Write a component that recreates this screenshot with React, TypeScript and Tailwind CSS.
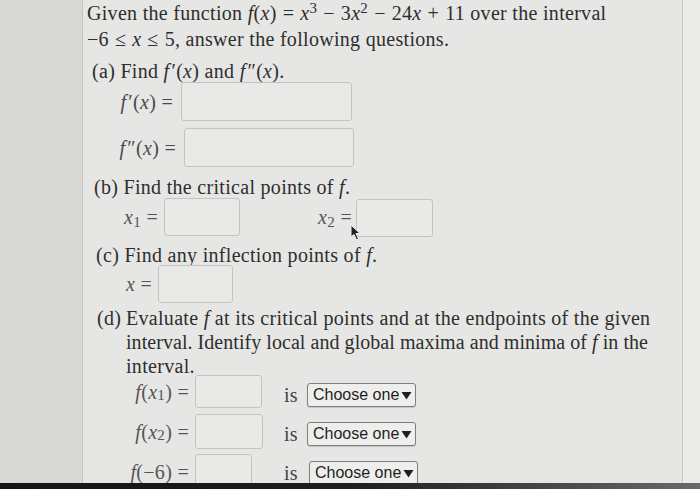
import React from 'react';

function Box({ w, h }: { w: string; h: string }) {
  return <div className={`${w} ${h} rounded-[3px] border-[1.5px] border-[#c3c3c1] bg-[#e9e9e7] shrink-0`} />;
}

function Select() {
  return (
    <div className="w-[109px] h-[24px] rounded-[3px] border border-[#7e7e7e] bg-[#eeeeec] pl-[5px] pr-[3px] flex items-center justify-between whitespace-nowrap font-['Liberation_Sans',sans-serif] text-[16px] tracking-normal text-[#1f1f1f] shadow-[0_1px_1px_rgba(0,0,0,0.15)]">
      <span>Choose one</span>
      <svg width="11" height="9" viewBox="0 0 11 9">
        <path d="M0.5 1 L10.5 1 L5.5 8.5 Z" fill="#1f1f1f" />
      </svg>
    </div>
  );
}

// opérateur avec l'espacement large de LaTeX
function Op({ c }: { c: string }) {
  return <span className="mx-[6px]">{c}</span>;
}

export default function App() {
  return (
    <div className="relative w-[700px] h-[489px] overflow-hidden flex font-['Liberation_Serif',serif] text-[20px] tracking-[0.3px] text-[#2e2e2e]">
      {/* bande grise à gauche */}
      <div className="w-[83px] shrink-0 bg-[#d8d8d7] border-r border-[#c4c4c2]" />

      {/* panneau principal */}
      <div className="w-[600px] shrink-0 bg-[#e6e6e4] border-r border-[#c6c6c4] flex flex-col">
        <p className="ml-[4px] leading-[26px] whitespace-nowrap">
          Given the function <i>f</i>(<i>x</i>)<Op c="=" /><i>x</i><sup>3</sup><Op c="−" />3<i>x</i><sup>2</sup><Op c="−" />24<i>x</i><Op c="+" />11 over the interval
          <br />
          −6<Op c="≤" /><i>x</i><Op c="≤" />5, answer the following questions.
        </p>

        {/* (a) */}
        <p className="mt-[6px] ml-[9px] leading-[26px]">
          (a) Find <i>f</i><span className="ml-[2px]">′</span>(<i>x</i>) and <i>f</i><span className="ml-[2px]">″</span>(<i>x</i>).
        </p>
        <div className="mt-[-2px] ml-[32px] flex items-center">
          <span className="w-[66px] pr-[8px] text-right text-[#4a4a4a] whitespace-nowrap">
            <i>f</i><span className="ml-[2px]">′</span>(<i>x</i>) =
          </span>
          <Box w="w-[171px]" h="h-[39px]" />
        </div>
        <div className="mt-[7px] ml-[32px] flex items-center">
          <span className="w-[69px] pr-[8px] text-right text-[#4a4a4a] whitespace-nowrap">
            <i>f</i><span className="ml-[2px]">″</span>(<i>x</i>) =
          </span>
          <Box w="w-[170px]" h="h-[39px]" />
        </div>

        {/* (b) */}
        <p className="mt-[7px] ml-[11px] leading-[26px]">
          (b) Find the critical points of <i>f</i>.
        </p>
        <div className="mt-[-4px] ml-[36px] flex items-center">
          <span className="w-[45px] pr-[6px] text-right text-[#555] whitespace-nowrap">
            <i>x</i><sub>1</sub> =
          </span>
          <Box w="w-[76px]" h="h-[38px]" />
          <span className="w-[116px] pr-[4px] text-right text-[#555] whitespace-nowrap">
            <i>x</i><sub>2</sub> =
          </span>
          <div className="mt-[3px]">
            <Box w="w-[77px]" h="h-[38px]" />
          </div>
        </div>

        {/* (c) */}
        <p className="mt-[5px] ml-[13px] leading-[26px]">
          (c) Find any inflection points of <i>f</i>.
        </p>
        <div className="mt-[-3px] ml-[37px] flex items-center">
          <span className="w-[38px] pr-[6px] text-right text-[#555] whitespace-nowrap">
            <i>x</i> =
          </span>
          <Box w="w-[75px]" h="h-[38px]" />
        </div>

        {/* (d) */}
        <div className="mt-[3px] ml-[14px] flex leading-[24px]">
          <span className="w-[29px] shrink-0">(d)</span>
          <p className="whitespace-nowrap">
            Evaluate <i>f</i> at its critical points and at the endpoints of the given
            <br />
            <span className="tracking-[0.05px]">
              interval. Identify local and global maxima and minima of <i>f</i> in the
            </span>
            <br />
            interval.
          </p>
        </div>

        <div className="mt-[-3px] ml-[46px] flex items-start">
          <span className="w-[66px] h-[33px] flex items-center justify-end pr-[6px] text-[#555] whitespace-nowrap">
            <i>f</i>(<i>x</i><sub>1</sub>) =
          </span>
          <div className="w-[89px]">
            <Box w="w-[67px]" h="h-[33px]" />
          </div>
          <span className="w-[23px] mt-[8px] leading-[24px] text-[#444]">is</span>
          <div className="mt-[8px]">
            <Select />
          </div>
        </div>

        <div className="mt-[6px] ml-[46px] flex items-start">
          <span className="w-[66px] h-[35px] flex items-center justify-end pr-[6px] text-[#555] whitespace-nowrap">
            <i>f</i>(<i>x</i><sub>2</sub>) =
          </span>
          <div className="w-[89px]">
            <Box w="w-[68px]" h="h-[35px]" />
          </div>
          <span className="w-[23px] mt-[8px] leading-[24px] text-[#444]">is</span>
          <div className="mt-[8px]">
            <Select />
          </div>
        </div>

        <div className="mt-[5px] ml-[46px] flex items-start">
          <span className="w-[66px] h-[35px] flex items-center justify-end pr-[6px] text-[#555] whitespace-nowrap">
            <i>f</i>(−6) =
          </span>
          <div className="w-[89px]">
            <Box w="w-[57px]" h="h-[35px]" />
          </div>
          <span className="w-[25px] mt-[7px] leading-[24px] text-[#444]">is</span>
          <div className="mt-[7px]">
            <Select />
          </div>
        </div>
      </div>

      {/* marge claire à droite */}
      <div className="flex-1 bg-[#ebebe9]" />

      {/* curseur de la souris */}
      <svg className="absolute left-[350px] top-[224px]" width="12" height="17" viewBox="0 0 12 17">
        <path d="M1 1 L1 13 L4 10.5 L6.5 16 L8.5 15 L6 9.5 L10 9.5 Z" fill="#222" stroke="#f2f2f2" strokeWidth="1" />
      </svg>

      {/* bord inférieur de l'écran */}
      <div className="absolute left-0 right-0 bottom-0 h-[6px] bg-linear-to-r from-[#141414] via-[#1e1e1e] to-[#6a6a6a]" />
    </div>
  );
}
